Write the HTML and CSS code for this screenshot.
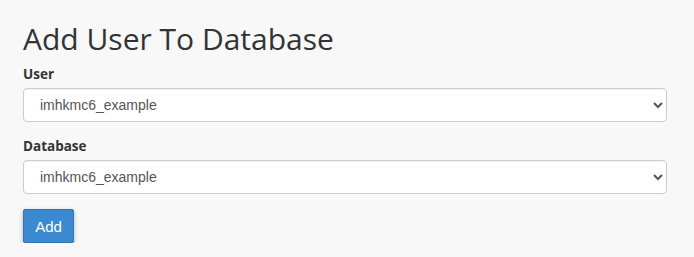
FILE: index.html
```html
<!DOCTYPE html>
<html>
<head lang="en">
    <meta charset="UTF-8">
    <title>Add User To Database</title>
    <link rel="stylesheet" href="styles.css">
</head>
<body>
    <div class="panel">
        <h1 class="title">Add User To Database</h1>
        <div class="field">
            <label class="label" for="user">User</label>
            <select class="select" id="user">
                <option>imhkmc6_example</option>
            </select>
        </div>
        <div class="field">
            <label class="label" for="db">Database</label>
            <select class="select" id="db">
                <option>imhkmc6_example</option>
            </select>
        </div>
        <button class="btn" type="button">Add</button>
    </div>
</body>
</html>
```

FILE: styles.css
```css
body{
    margin: 0;
    background-color: #f8f8f8;
    font-family: "Open Sans", "Liberation Sans", sans-serif;
    color: #333;
}
.panel{
    padding: 22px 27px 0 23px;
}
.title{
    margin: 0 0 10px;
    font-size: 30px;
    font-weight: normal;
    line-height: 1.1;
}
.field{
    margin-bottom: 15px;
}
.label{
    display: block;
    margin-bottom: 5px;
    font-size: 13.5px;
    font-weight: bold;
    line-height: 18px;
}
.select{
    display: block;
    width: 100%;
    height: 34px;
    padding: 6px 8px 6px 12px;
    border: 1px solid #ccc;
    border-radius: 4px;
    background-color: #fff;
    font-family: "Liberation Sans", Arial, sans-serif;
    font-size: 14px;
    color: #555;
    box-shadow: inset 0 1px 1px rgba(0,0,0,.05);
}
.btn{
    width: 51px;
    height: 34px;
    padding: 6px 10px;
    border: 1px solid #2f74b8;
    border-radius: 2px;
    background-color: #3a89d1;
    color: #fff;
    font-family: "Liberation Sans", Arial, sans-serif;
    font-size: 15px;
    box-shadow: 0 2px 5px rgba(0,0,0,.25);
}
```
